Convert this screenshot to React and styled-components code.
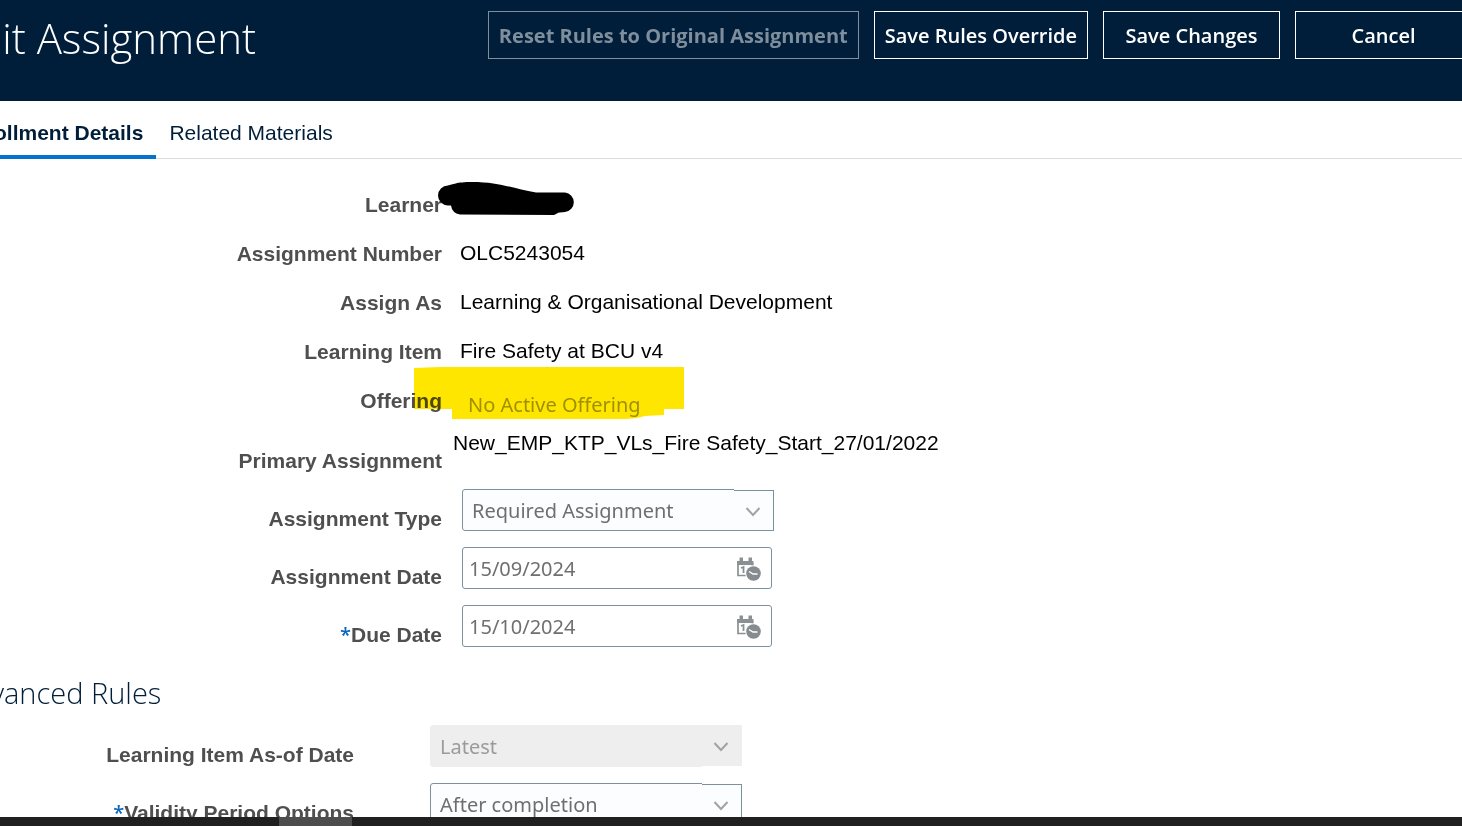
import React from "react";
import styled, { createGlobalStyle, css } from "styled-components";

const GlobalStyle = createGlobalStyle`
  * {
    box-sizing: border-box;
  }

  body {
    margin: 0;
    background-color: #ffffff;
    font-family: "Liberation Sans", Arial, sans-serif;
    font-size: 21px;
    line-height: 24px;
    color: #000000;
  }
`

const Screen = styled.div`
  display: flex;
  flex-direction: column;
  height: 100vh;
  overflow: hidden;
`

const Viewport = styled.div`
  flex: 1;
  min-height: 0;
  overflow: hidden;
`

/* the page is scrolled a little to the right inside the window */
const Page = styled.div`
  margin: 0 -10px 0 -46px;
`

const Header = styled.header`
  display: flex;
  justify-content: space-between;
  align-items: flex-start;
  height: 101px;
  padding-top: 11px;
  background-color: #001e3a;
`

const Title = styled.h1`
  margin: 0;
  font-family: "Open Sans", "Noto Sans", sans-serif;
  font-size: 42px;
  line-height: 54px;
  font-weight: 300;
  white-space: nowrap;
  color: #ffffff;
`

const Actions = styled.div`
  display: flex;
  gap: 15px;
`

const ActionButton = styled.button`
  height: 48px;
  min-width: 177px;
  padding: 0 10px;
  border: 1px solid #ffffff;
  background-color: transparent;
  font-family: "Open Sans", "Noto Sans", sans-serif;
  font-size: 20px;
  font-weight: 600;
  white-space: nowrap;
  color: #ffffff;

  &:disabled {
    border-color: #7f8e9c;
    color: #7f8e9c;
    font-weight: 700;
  }
`

const Tabs = styled.nav`
  display: flex;
  height: 58px;
  padding-left: 5px;
  border-bottom: 1px solid #d6dde2;
`

const Tab = styled.a`
  height: 58px;
  padding: 20px 13px 0 ${({ $active }) => ($active ? "0" : "13px")};
  border-bottom: ${({ $active }) => ($active ? "4px solid #0572ce" : "0")};
  font-weight: ${({ $active }) => ($active ? "bold" : "normal")};
  white-space: nowrap;
  text-decoration: none;
  color: #001e3a;
`

const Fields = styled.div`
  position: relative;
  display: flex;
  flex-direction: column;
`

const Details = styled(Fields)`
  padding-top: 20px;
`

const Row = styled.div`
  display: grid;
  grid-template-columns: ${({ $rules }) => ($rules ? "400px 1fr" : "488px 1fr")};
  column-gap: ${({ $rules }) => ($rules ? "67px" : "11px")};
  align-items: ${({ $tall }) => ($tall ? "start" : "center")};
  height: ${({ $tall }) => ($tall ? "58px" : "49px")};
`

const TallRows = styled.div`
  margin-top: 7px;
`

const Label = styled.label`
  align-self: center;
  padding-top: 2px;
  text-align: right;
  font-weight: bold;
  color: #4f4f4f;
`

const Required = styled.span`
  font-family: "Open Sans", "Noto Sans", sans-serif;
  font-size: 20px;
  font-weight: 600;
  line-height: 20px;
  color: #0b66b8;
`

const Value = styled.output`
  padding-left: 7px;
`

const Primary = styled.output`
  display: block;
`

const Offering = styled.output`
  padding: 10px 0 0 15px;
  font-family: "Noto Sans", "Open Sans", sans-serif;
  font-size: 20px;
  color: #a0a0a0;
`

const Control = styled.div`
  position: relative;
  width: ${({ $wide }) => ($wide ? "312px" : "310px")};
  height: 42px;
  margin-left: 9px;
`

const field = css`
  width: 100%;
  height: 42px;
  border: 1px solid #7b929e;
  border-radius: 3px;
  font-family: "Noto Sans", "Open Sans", sans-serif;
  font-size: 20px;
  color: #6f6f6f;
`

const Select = styled.select`
  ${field}
  appearance: none;
  padding: 0 44px 0 9px;
  background-color: #fcfdfe;

  &:disabled {
    border-color: #eeeeef;
    background-color: #eeeeef;
    color: #9b9b9b;
    opacity: 1;
  }
`

const Arrow = styled.span`
  position: absolute;
  right: 0;
  top: ${({ $disabled }) => ($disabled ? "0" : "1px")};
  bottom: ${({ $disabled }) => ($disabled ? "1px" : "0")};
  display: flex;
  align-items: center;
  width: 40px;
  padding: 3px 0 0 11px;
  border: 1px solid ${({ $disabled }) => ($disabled ? "#eeeeef" : "#7b929e")};
  border-left: 0;
  background-color: ${({ $disabled }) => ($disabled ? "#eeeeef" : "#fcfdfe")};
  box-shadow: 0 ${({ $disabled }) => ($disabled ? "1px" : "-1px")} 0 #ffffff;
  pointer-events: none;
`

const DateInput = styled.input`
  ${field}
  padding: 0 48px 0 6px;
  background-color: #ffffff;
`

const CalendarButton = styled.button`
  position: absolute;
  right: 8px;
  top: 7px;
  width: 30px;
  height: 30px;
  padding: 3px;
  border: 0;
  background: none;

  svg {
    display: block;
  }
`

const SectionTitle = styled.h2`
  margin: 0;
  padding: 11px 0 13px 2px;
  font-family: "Open Sans", "Noto Sans", sans-serif;
  font-size: 29px;
  line-height: 38px;
  font-weight: 300;
  color: #001e3a;
`

const Redaction = styled.svg`
  position: absolute;
  left: 484px;
  top: 22px;
  pointer-events: none;
`

const Highlight = styled.svg`
  position: absolute;
  left: 460px;
  top: 208px;
  mix-blend-mode: multiply;
  pointer-events: none;
`

const Taskbar = styled.footer`
  flex: none;
  height: 9px;
  padding-left: 279px;
  background-color: #202020;
`

const TaskbarItem = styled.div`
  width: 73px;
  height: 9px;
  background-color: #4d4d4d;
`

function CalendarIcon() {
  return (
    <svg width="24" height="24" viewBox="0 0 24 24" aria-hidden="true">
      <path d="M1 6v12.500h8M15.500 6v4" fill="none" stroke="#8b9092" strokeWidth="1.700" />
      <path d="M0 4h16.500v4H0z" fill="#8b9092" />
      <path d="M2.500 0.500h3.500v4H2.500zM11.500 0.500h3.500v4h-3.500z" fill="#8b9092" />
      <path d="M4 11l2.500-1v6" fill="none" stroke="#8b9092" strokeWidth="1.800" />
      <circle cx="16.500" cy="16.500" r="8.300" fill="#ffffff" />
      <circle cx="16.500" cy="16.500" r="7.300" fill="#858b8e" />
      <path d="M12 14.500l4 2.500h4.500" fill="none" stroke="#ffffff" strokeWidth="1.400" />
    </svg>
  )
}

function Dropdown({ id, options, disabled }) {
  return (
    <Control $wide>
      <Select id={id} disabled={disabled}>
        {options.map((option) => (
          <option key={option}>{option}</option>
        ))}
      </Select>
      <Arrow $disabled={disabled}>
        <svg width="16" height="12" viewBox="0 0 16 12" aria-hidden="true">
          <path d="M1.500 2l6.500 7 6.500-7" fill="none" stroke="#a0a3a5" strokeWidth="2" />
        </svg>
      </Arrow>
    </Control>
  )
}

function DateField({ id, label, required, value }) {
  return (
    <Row $tall>
      <Label htmlFor={id}>
        {required && <Required>*</Required>}
        {label}
      </Label>
      <Control>
        <DateInput id={id} type="text" defaultValue={value} />
        <CalendarButton type="button" aria-label={`Select ${label}`}>
          <CalendarIcon />
        </CalendarButton>
      </Control>
    </Row>
  )
}

const details = [
  { id: "number", label: "Assignment Number", value: "OLC5243054" },
  { id: "assignAs", label: "Assign As", value: "Learning & Organisational Development" },
  { id: "item", label: "Learning Item", value: "Fire Safety at BCU v4" },
]

export default function App() {
  return (
    <Screen>
      <GlobalStyle />
      <Viewport>
        <Page>
          <Header>
            <Title>Edit Assignment</Title>
            <Actions>
              <ActionButton disabled>Reset Rules to Original Assignment</ActionButton>
              <ActionButton>Save Rules Override</ActionButton>
              <ActionButton>Save Changes</ActionButton>
              <ActionButton>Cancel</ActionButton>
            </Actions>
          </Header>

          <Tabs>
            <Tab href="#details" $active>Enrollment Details</Tab>
            <Tab href="#materials">Related Materials</Tab>
          </Tabs>

          <Details>
            <Row>
              <Label htmlFor="learner">Learner</Label>
              <Value id="learner" />
            </Row>
            {details.map((item) => (
              <Row key={item.id}>
                <Label htmlFor={item.id}>{item.label}</Label>
                <Value id={item.id}>{item.value}</Value>
              </Row>
            ))}
            <Row>
              <Label htmlFor="offering">Offering</Label>
              <Offering id="offering">No Active Offering</Offering>
            </Row>
            <TallRows>
              <Row $tall>
                <Label htmlFor="primary">Primary Assignment</Label>
                <Primary id="primary">New_EMP_KTP_VLs_Fire Safety_Start_27/01/2022</Primary>
              </Row>
              <Row $tall>
                <Label htmlFor="type">Assignment Type</Label>
                <Dropdown id="type" options={["Required Assignment"]} />
              </Row>
              <DateField id="assignmentDate" label="Assignment Date" value="15/09/2024" />
              <DateField id="dueDate" label="Due Date" value="15/10/2024" required />
            </TallRows>

            <Redaction width="138" height="36" viewBox="437 181 138 36" aria-hidden="true">
              <path d="M447 185.500C452 184.500 455 182 471 182C500 182 512 189 535 192.500H564A9.800 9.800 0 0 1 564 212Q558 212 556 213.500L553 215L459 214.500Q451 213 450 205.500H447A10 10 0 0 1 447 185.500Z" />
            </Redaction>
            <Highlight width="270" height="53" viewBox="414 367 270 53" aria-hidden="true">
              <path d="M414 368L440 367H684V409H664V415L645 416Q636 419 623 419H452V409H414Z" fill="#ffe600" />
            </Highlight>
          </Details>

          <SectionTitle>Advanced Rules</SectionTitle>
          <Fields>
            <Row $tall $rules>
              <Label htmlFor="asOf">Learning Item As-of Date</Label>
              <Dropdown id="asOf" options={["Latest"]} disabled />
            </Row>
            <Row $tall $rules>
              <Label htmlFor="validity">
                <Required>*</Required>
                Validity Period Options
              </Label>
              <Dropdown id="validity" options={["After completion"]} />
            </Row>
          </Fields>
        </Page>
      </Viewport>
      <Taskbar>
        <TaskbarItem />
      </Taskbar>
    </Screen>
  )
}
